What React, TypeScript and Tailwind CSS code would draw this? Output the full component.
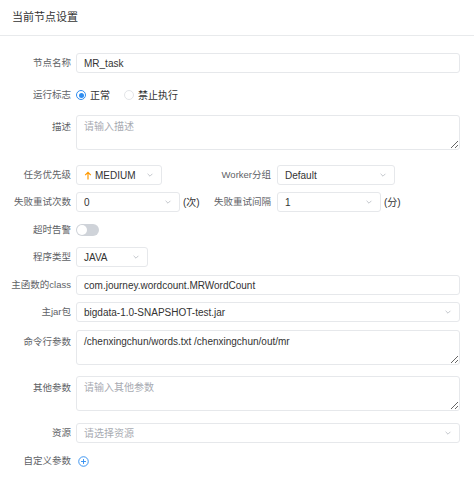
import React from 'react';

const font = { fontFamily: '"Liberation Sans", "Noto Sans CJK SC", sans-serif' };

function Chevron() {
  return (
    <svg width="8" height="8" viewBox="0 0 10 10" className="shrink-0">
      <path d="M2 3.5 L5 6.5 L8 3.5" fill="none" stroke="#b5b9c0" strokeWidth="1" />
    </svg>
  );
}

function Label({ children, top }: { children: React.ReactNode; top?: boolean }) {
  return (
    <div
      className={`w-[76px] shrink-0 whitespace-nowrap pr-[5px] text-right text-[9.5px] text-[#606266] ${top ? 'pt-[5px]' : ''}`}
    >
      {children}
    </div>
  );
}

function Box({ children, className = '' }: { children: React.ReactNode; className?: string }) {
  return (
    <div
      className={`flex h-[20px] items-center rounded-[3px] border border-[#e6e8eb] bg-white px-[7px] text-[10px] text-[#333] ${className}`}
    >
      {children}
    </div>
  );
}

function Select({ value, className = '', placeholder }: { value?: React.ReactNode; className?: string; placeholder?: string }) {
  return (
    <Box className={`justify-between ${className}`}>
      <span className={placeholder ? 'text-[#a8abb2]' : ''}>{value ?? placeholder}</span>
      <Chevron />
    </Box>
  );
}

function Area({ value, placeholder }: { value?: string; placeholder?: string }) {
  return (
    <textarea
      readOnly
      defaultValue={value}
      placeholder={placeholder}
      className="h-[35px] flex-1 rounded-[3px] border border-[#e6e8eb] bg-white px-[7px] py-[4px] text-[10px] leading-[14px] text-[#333] outline-none placeholder:text-[#a8abb2]"
      style={font}
    />
  );
}

export default function App() {
  return (
    <div className="h-[494px] w-[474px] bg-white" style={font}>
      <div className="flex h-[36px] items-center border-b border-[#e8eaec] px-[12px] text-[11px] text-[#333]">
        当前节点设置
      </div>
      <div className="pr-[14px]">
        <div className="mt-[17px] flex items-center">
          <Label>节点名称</Label>
          <Box className="flex-1">MR_task</Box>
        </div>

        <div className="mt-[12px] flex h-[20px] items-center">
          <Label>运行标志</Label>
          <div className="flex items-center text-[10px] text-[#333]">
            <span className="flex h-[10px] w-[10px] items-center justify-center rounded-full border border-[#2d8cf0]">
              <span className="h-[5px] w-[5px] rounded-full bg-[#2d8cf0]" />
            </span>
            <span className="ml-[4px]">正常</span>
            <span className="ml-[14px] h-[10px] w-[10px] rounded-full border border-[#e3e5e8]" />
            <span className="ml-[4px]">禁止执行</span>
          </div>
        </div>

        <div className="mt-[10px] flex">
          <Label top>描述</Label>
          <Area placeholder="请输入描述" />
        </div>

        <div className="mt-[15px] flex items-center">
          <Label>任务优先级</Label>
          <Select
            className="w-[86px]"
            value={
              <span className="flex items-center">
                <svg width="8" height="9" viewBox="0 0 8 9" className="mr-[3px]">
                  <path d="M4 8.5 V1.5 M1.2 4.2 L4 1.3 L6.8 4.2" fill="none" stroke="#ff9900" strokeWidth="1.2" />
                </svg>
                MEDIUM
              </span>
            }
          />
          <div className="w-[115px] shrink-0 whitespace-nowrap pr-[6px] text-right text-[9.5px] text-[#606266]">Worker分组</div>
          <Select className="w-[118px]" value="Default" />
        </div>

        <div className="mt-[7px] flex items-center">
          <Label>失败重试次数</Label>
          <Select className="w-[104px]" value="0" />
          <span className="w-[30px] shrink-0 pl-[3px] text-[10px] text-[#333]">(次)</span>
          <div className="w-[67px] shrink-0 whitespace-nowrap pr-[6px] text-right text-[9.5px] text-[#606266]">失败重试间隔</div>
          <Select className="w-[104px]" value="1" />
          <span className="pl-[3px] text-[10px] text-[#333]">(分)</span>
        </div>

        <div className="mt-[8px] flex h-[20px] items-center">
          <Label>超时告警</Label>
          <span className="relative h-[12px] w-[23px] rounded-full bg-[#cfd3d9]">
            <span className="absolute left-[1px] top-[1px] h-[10px] w-[10px] rounded-full bg-white" />
          </span>
        </div>

        <div className="mt-[7px] flex items-center">
          <Label>程序类型</Label>
          <Select className="w-[72px]" value="JAVA" />
        </div>

        <div className="mt-[8px] flex items-center">
          <Label>主函数的class</Label>
          <Box className="flex-1">com.journey.wordcount.MRWordCount</Box>
        </div>

        <div className="mt-[7px] flex items-center">
          <Label>主jar包</Label>
          <Select className="flex-1" value="bigdata-1.0-SNAPSHOT-test.jar" />
        </div>

        <div className="mt-[8px] flex">
          <Label top>命令行参数</Label>
          <Area value="/chenxingchun/words.txt /chenxingchun/out/mr" />
        </div>

        <div className="mt-[11px] flex">
          <Label top>其他参数</Label>
          <Area placeholder="请输入其他参数" />
        </div>

        <div className="mt-[12px] flex items-center">
          <Label>资源</Label>
          <Select className="flex-1" placeholder="请选择资源" />
        </div>

        <div className="mt-[8px] flex h-[20px] items-center">
          <Label>自定义参数</Label>
          <svg width="11" height="11" viewBox="0 0 12 12" className="ml-[2px]">
            <circle cx="6" cy="6" r="5.2" fill="none" stroke="#2d8cf0" strokeWidth="1" />
            <path d="M6 3.3 V8.7 M3.3 6 H8.7" stroke="#2d8cf0" strokeWidth="1" />
          </svg>
        </div>
      </div>
    </div>
  );
}
